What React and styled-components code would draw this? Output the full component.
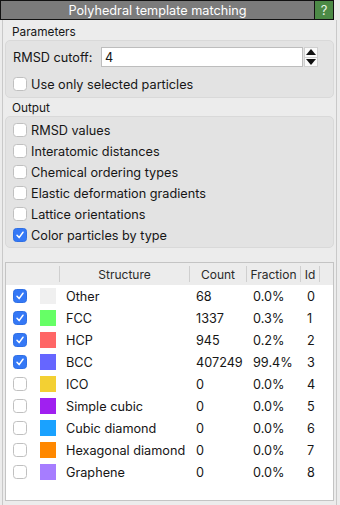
import React from "react";
import styled, { createGlobalStyle } from "styled-components";

const GlobalStyle = createGlobalStyle`
  html, body {
    margin: 0;
    padding: 0;
    background: #ececec;
  }
  body {
    font-family: "Inter", "Liberation Sans", sans-serif;
    font-size: 12.7px;
    color: #161616;
  }
`;

const Window = styled.div`
  width: 340px;
  height: 505px;
  box-sizing: border-box;
  display: flex;
  flex-direction: column;
  overflow: hidden;
`;

const TitleBar = styled.div`
  display: flex;
  height: 20px;
  box-sizing: border-box;
  border: 1px solid #111;
  margin-right: 6px;
`;

const Title = styled.div`
  flex: 1;
  background: #7b7b7b;
  color: #fff;
  font-size: 12.7px;
  display: flex;
  align-items: center;
  justify-content: center;
`;

const HelpButton = styled.div`
  width: 18px;
  background: #4c8a46;
  border-left: 1px solid #111;
  color: #e8f3e6;
  font-size: 13px;
  display: flex;
  align-items: center;
  justify-content: center;
`;

const Body = styled.div`
  flex: 1;
  margin: 0 3px 0 2px;
  border-left: 1px solid #c9c9c9;
  border-right: 1px solid #c9c9c9;
  padding: 2px 2px 4px 2px;
  display: flex;
  flex-direction: column;
`;

const SectionLabel = styled.div`
  font-size: 11.8px;
  padding-left: 7px;
  height: 18px;
  line-height: 20px;
`;

const Group = styled.div`
  background: #e3e3e3;
  border: 1px solid #d9d9d9;
  border-radius: 5px;
  padding: ${(p) => p.$pad || "6px 7px"};
  display: flex;
  flex-direction: column;
  gap: ${(p) => p.$gap || "7px"};
`;

const FieldRow = styled.div`
  display: flex;
  align-items: center;
  gap: 6px;
`;

const FieldLabel = styled.span`
  width: 82px;
`;

const NumberInput = styled.div`
  width: 202px;
  height: 20px;
  box-sizing: border-box;
  background: #fff;
  border: 1px solid #bdbdbd;
  display: flex;
  align-items: center;
  padding-left: 3px;
`;

const Spinner = styled.div`
  display: flex;
  flex-direction: column;
  width: 14px;
  height: 20px;
  margin-left: -5px;
`;

const SpinHalf = styled.div`
  flex: 1;
  display: flex;
  align-items: center;
  justify-content: center;
  background: #fafafa;
  border: 1px solid #cfcfcf;
  border-top: ${(p) => (p.$down ? "none" : "1px solid #cfcfcf")};
`;

const CheckRow = styled.label`
  display: flex;
  align-items: center;
  gap: 4px;
  height: 14px;
`;

const Box = styled.span`
  width: 14px;
  height: 14px;
  box-sizing: border-box;
  border-radius: 3.5px;
  flex-shrink: 0;
  display: inline-flex;
  align-items: center;
  justify-content: center;
  background: ${(p) => (p.$on ? "#3478f6" : "#fff")};
  border: 1px solid ${(p) => (p.$on ? "#2f6fe4" : "#c0c0c0")};
`;

const TableFrame = styled.div`
  margin-top: 14px;
  flex: 1;
  background: #fff;
  border: 1px solid #c4c4c4;
  display: flex;
  flex-direction: column;
`;

const HeaderRow = styled.div`
  display: grid;
  grid-template-columns: 54px 130px 57px 54px 19px 1fr;
  height: 22px;
  background: #ececec;
  font-size: 12px;
  color: #2a2a2a;
`;

const HeadCell = styled.div`
  display: flex;
  align-items: center;
  justify-content: center;
  border-right: ${(p) => (p.$last ? "none" : "1px solid #cfcfcf")};
  margin: 3px 0;
`;

const Row = styled.div`
  display: grid;
  grid-template-columns: 7px 27px 20px 130px 57px 54px 19px 1fr;
  height: 22px;
  align-items: center;
`;

const Swatch = styled.span`
  width: 16px;
  height: 16px;
  background: ${(p) => p.$color};
`;

const Cell = styled.span`
  padding-left: 6px;
  white-space: nowrap;
`;

const Check = ({ on }) => (
  <Box $on={on}>
    {on && (
      <svg width="10" height="10" viewBox="0 0 10 10">
        <path d="M2 5.3 L4.1 7.6 L8 2.2" fill="none" stroke="#fff" strokeWidth="1.5" strokeLinecap="round" strokeLinejoin="round" />
      </svg>
    )}
  </Box>
);

const outputs = [
  ["RMSD values", false],
  ["Interatomic distances", false],
  ["Chemical ordering types", false],
  ["Elastic deformation gradients", false],
  ["Lattice orientations", false],
  ["Color particles by type", true],
];

const structures = [
  { on: true, color: "#f0f0f0", name: "Other", count: "68", frac: "0.0%", id: 0 },
  { on: true, color: "#66ff66", name: "FCC", count: "1337", frac: "0.3%", id: 1 },
  { on: true, color: "#ff6666", name: "HCP", count: "945", frac: "0.2%", id: 2 },
  { on: true, color: "#6666ff", name: "BCC", count: "407249", frac: "99.4%", id: 3 },
  { on: false, color: "#f3d033", name: "ICO", count: "0", frac: "0.0%", id: 4 },
  { on: false, color: "#a020f0", name: "Simple cubic", count: "0", frac: "0.0%", id: 5 },
  { on: false, color: "#1aa2ff", name: "Cubic diamond", count: "0", frac: "0.0%", id: 6 },
  { on: false, color: "#ff8800", name: "Hexagonal diamond", count: "0", frac: "0.0%", id: 7 },
  { on: false, color: "#a67dff", name: "Graphene", count: "0", frac: "0.0%", id: 8 },
];

export default function App() {
  return (
    <Window>
      <GlobalStyle />
      <TitleBar>
        <Title>Polyhedral template matching</Title>
        <HelpButton>?</HelpButton>
      </TitleBar>
      <Body>
        <SectionLabel>Parameters</SectionLabel>
        <Group $pad="6px 7px 6px 7px" $gap="10px">
          <FieldRow>
            <FieldLabel>RMSD cutoff:</FieldLabel>
            <NumberInput>4</NumberInput>
            <Spinner>
              <SpinHalf>
                <svg width="10" height="6" viewBox="0 0 10 6">
                  <path d="M0 6 L5 0 L10 6 Z" fill="#111" />
                </svg>
              </SpinHalf>
              <SpinHalf $down>
                <svg width="10" height="6" viewBox="0 0 10 6">
                  <path d="M0 0 L5 6 L10 0 Z" fill="#111" />
                </svg>
              </SpinHalf>
            </Spinner>
          </FieldRow>
          <CheckRow>
            <Check on={false} />
            Use only selected particles
          </CheckRow>
        </Group>
        <SectionLabel>Output</SectionLabel>
        <Group $pad="6px 7px 5px 7px">
          {outputs.map(([label, on]) => (
            <CheckRow key={label}>
              <Check on={on} />
              {label}
            </CheckRow>
          ))}
        </Group>
        <TableFrame>
          <HeaderRow>
            <HeadCell />
            <HeadCell>Structure</HeadCell>
            <HeadCell>Count</HeadCell>
            <HeadCell>Fraction</HeadCell>
            <HeadCell>Id</HeadCell>
            <HeadCell $last />
          </HeaderRow>
          {structures.map((s) => (
            <Row key={s.id}>
              <span />
              <Check on={s.on} />
              <Swatch $color={s.color} />
              <Cell>{s.name}</Cell>
              <Cell>{s.count}</Cell>
              <Cell>{s.frac}</Cell>
              <Cell>{s.id}</Cell>
              <span />
            </Row>
          ))}
        </TableFrame>
      </Body>
    </Window>
  );
}
